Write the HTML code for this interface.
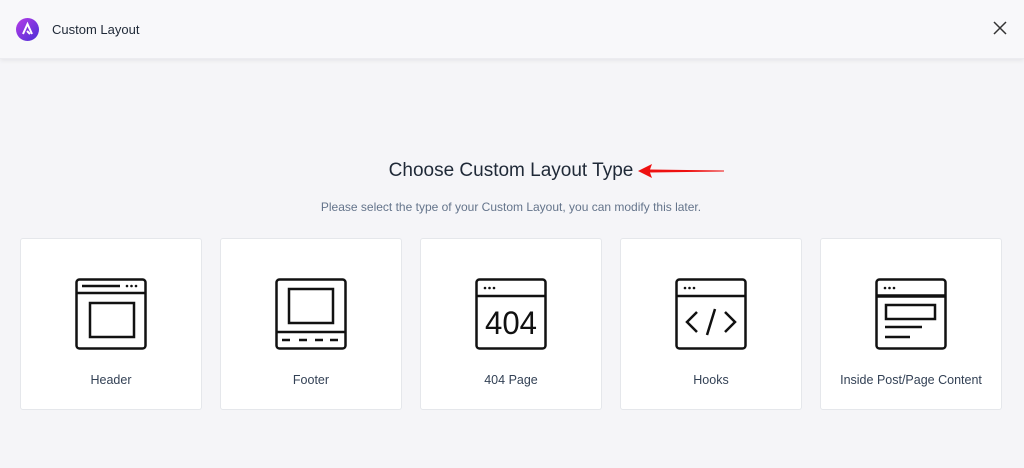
<!DOCTYPE html>
<html><head><style>
body{margin:0;width:1024px;height:468px;background:#f5f5f8;font-family:"Liberation Sans",sans-serif;position:relative;overflow:hidden}
.top{position:absolute;left:0;top:0;width:1024px;height:58px;background:#f8f8fa;box-shadow:0 2px 4px rgba(0,0,0,.06);border-bottom:1px solid #ececf0}
.logo{position:absolute;left:16px;top:18px;width:23px;height:23px;border-radius:50%;background:linear-gradient(135deg,#b63ce8,#4b2fd6)}
.ttl{position:absolute;left:52px;top:22px;font-size:13px;color:#1f2937}
.x{position:absolute;left:993px;top:21px}
h1{position:absolute;left:0;width:1022px;top:160px;margin:0;text-align:center;font-size:19px;font-weight:normal;color:#1f2937}
.sub{position:absolute;left:0;width:1022px;top:200px;text-align:center;font-size:12px;color:#64748b}
.card{position:absolute;top:238px;width:180px;height:170px;background:#fff;border:1px solid #e5e7eb;border-radius:3px}
.card svg{position:absolute;left:54px;top:39px}
.card span{position:absolute;left:0;width:100%;top:134px;text-align:center;font-size:12.5px;color:#334155}
</style></head><body>
<div class="top"><div class="logo"><svg width="23" height="23" viewBox="0 0 23 23"><path d="M7 16 L11.5 6 L16 16 M11 13 L14 16" stroke="#fff" stroke-width="2" fill="none"/></svg></div><div class="ttl">Custom Layout</div>
<svg class="x" width="14" height="14" viewBox="0 0 14 14"><path d="M1 1L13 13M13 1L1 13" stroke="#333" stroke-width="1.5"/></svg></div>
<h1>Choose Custom Layout Type</h1>
<svg style="position:absolute;left:638px;top:164px" width="88" height="14" viewBox="0 0 88 14"><path d="M0 7 L14 0 L12 5.5 L86 6.5 L86 7.5 L12 8.5 L14 14 Z" fill="#e11"/></svg>
<div class="sub">Please select the type of your Custom Layout, you can modify this later.</div>

<div class="card" style="left:20px"><svg width="72" height="72" viewBox="0 0 72 72" fill="none" stroke="#111" stroke-width="2.5"><rect x="1.5" y="1.5" width="69" height="69" rx="3"/><path d="M1.5 15H70.5M7 8H45"/><circle cx="52" cy="8" r="1.3" fill="#111" stroke="none"/><circle cx="56.5" cy="8" r="1.3" fill="#111" stroke="none"/><circle cx="61" cy="8" r="1.3" fill="#111" stroke="none"/><rect x="15" y="25" width="44" height="34"/></svg><span>Header</span></div>

<div class="card" style="left:220px"><svg width="72" height="72" viewBox="0 0 72 72" fill="none" stroke="#111" stroke-width="2.5"><rect x="1.5" y="1.5" width="69" height="69" rx="3"/><rect x="14" y="11" width="44" height="34"/><path d="M1.5 54H70.5M7 62H15M24 62H32M40 62H48M55 62H63"/></svg><span>Footer</span></div>

<div class="card" style="left:420px"><svg width="72" height="72" viewBox="0 0 72 72" fill="none" stroke="#111" stroke-width="2.5"><rect x="1.5" y="1.5" width="69" height="69" rx="3"/><path d="M1.5 18H70.5"/><circle cx="10" cy="10" r="1.3" fill="#111" stroke="none"/><circle cx="14.5" cy="10" r="1.3" fill="#111" stroke="none"/><circle cx="19" cy="10" r="1.3" fill="#111" stroke="none"/><text x="36" y="56" text-anchor="middle" font-family="Liberation Sans,sans-serif" font-size="32" fill="#111" stroke="none" textLength="52" lengthAdjust="spacingAndGlyphs">404</text></svg><span>404 Page</span></div>

<div class="card" style="left:620px"><svg width="72" height="72" viewBox="0 0 72 72" fill="none" stroke="#111" stroke-width="2.5"><rect x="1.5" y="1.5" width="69" height="69" rx="3"/><path d="M1.5 18H70.5M22 34L12 44L22 54M50 34L60 44L50 54M40 31L32 57"/><circle cx="10" cy="10" r="1.3" fill="#111" stroke="none"/><circle cx="14.5" cy="10" r="1.3" fill="#111" stroke="none"/><circle cx="19" cy="10" r="1.3" fill="#111" stroke="none"/></svg><span>Hooks</span></div>

<div class="card" style="left:820px"><svg width="72" height="72" viewBox="0 0 72 72" fill="none" stroke="#111" stroke-width="2.5"><rect x="1.5" y="1.5" width="69" height="69" rx="3"/><path d="M1.5 18H70.5" stroke-width="3.5"/><circle cx="10" cy="10" r="1.3" fill="#111" stroke="none"/><circle cx="14.5" cy="10" r="1.3" fill="#111" stroke="none"/><circle cx="19" cy="10" r="1.3" fill="#111" stroke="none"/><rect x="11" y="27" width="49" height="14"/><path d="M10 49H47M10 59H35"/></svg><span>Inside Post/Page Content</span></div>
</body></html>
